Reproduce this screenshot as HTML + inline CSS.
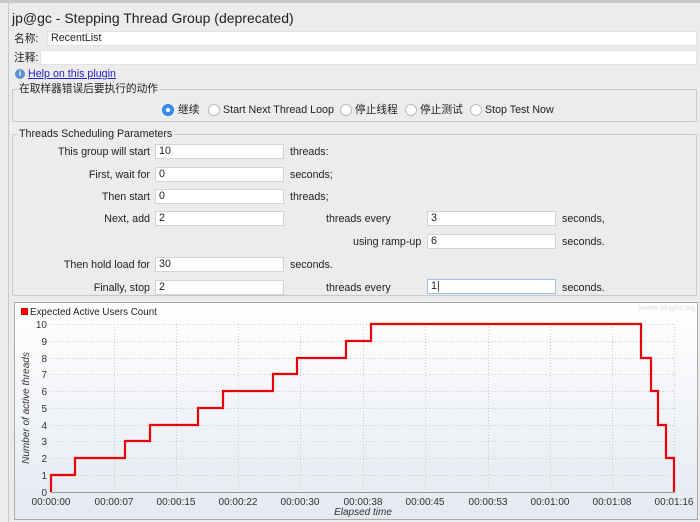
<!DOCTYPE html>
<html><head><meta charset="utf-8"><style>
*{box-sizing:border-box;margin:0;padding:0}
body{width:700px;height:522px;overflow:hidden;background:#ececec;font-family:"Liberation Sans","Noto Sans CJK SC",sans-serif;font-size:10.7px;color:#222;position:relative}
.a{position:absolute;white-space:nowrap;line-height:12px}
.in{position:absolute;background:#fff;border:1px solid #d4d4d4;height:15px;font-size:10.7px;line-height:13px;padding-left:3px}
.r{text-align:right}
.fs{position:absolute;border:1px solid #c9c9c9;border-radius:2px}
.lg{position:absolute;background:#ececec;padding:0 2px;font-size:10.7px;line-height:12px}
.rb{position:absolute;width:12px;height:12px;border-radius:50%;background:#fff;border:1px solid #bbb}
</style></head><body>
<div class="a" style="left:0;top:0;width:700px;height:3px;background:#c8c8c8"></div>
<div class="a" style="left:8px;top:3px;width:1px;height:519px;background:#c8c8c8"></div>
<div class="a" style="left:12px;top:10px;font-size:14px;line-height:16px;color:#222">jp@gc - Stepping Thread Group (deprecated)</div>
<div class="a" style="left:14px;top:33px">名称:</div>
<div class="in" style="left:47px;top:31px;width:650px;border-color:#e2e2e2">RecentList</div>
<div class="a" style="left:14px;top:52px">注释:</div>
<div class="in" style="left:40px;top:50px;width:657px;border-color:#e2e2e2"></div>
<div class="a" style="left:15px;top:69px;width:10px;height:10px;border-radius:50%;background:#5b8fd0;color:#fff;font-size:8px;text-align:center;line-height:10px;font-weight:bold">i</div>
<div class="a" style="left:28px;top:68px;color:#2222cc;text-decoration:underline">Help on this plugin</div>
<div class="fs" style="left:12px;top:89px;width:685px;height:33px"></div>
<div class="lg" style="left:17px;top:83px">在取样器错误后要执行的动作</div>
<div class="rb" style="left:162px;top:104px;background:#3b8ef0;border-color:#2d7fe0"><div style="position:absolute;left:3px;top:3px;width:4px;height:4px;border-radius:50%;background:#fff"></div></div>
<div class="a" style="left:178px;top:104px">继续</div>
<div class="rb" style="left:208px;top:104px"></div>
<div class="a" style="left:223px;top:104px">Start Next Thread Loop</div>
<div class="rb" style="left:340px;top:104px"></div>
<div class="a" style="left:355px;top:104px">停止线程</div>
<div class="rb" style="left:405px;top:104px"></div>
<div class="a" style="left:420px;top:104px">停止测试</div>
<div class="rb" style="left:470px;top:104px"></div>
<div class="a" style="left:485px;top:104px">Stop Test Now</div>
<div class="fs" style="left:12px;top:134px;width:685px;height:162px"></div>
<div class="lg" style="left:17px;top:128px">Threads Scheduling Parameters</div>
<div class="a r" style="left:0;width:150px;top:146px">This group will start</div>
<div class="in" style="left:155px;top:144px;width:129px">10</div>
<div class="a" style="left:290px;top:146px">threads:</div>
<div class="a r" style="left:0;width:150px;top:169px">First, wait for</div>
<div class="in" style="left:155px;top:167px;width:129px">0</div>
<div class="a" style="left:290px;top:169px">seconds;</div>
<div class="a r" style="left:0;width:150px;top:191px">Then start</div>
<div class="in" style="left:155px;top:189px;width:129px">0</div>
<div class="a" style="left:290px;top:191px">threads;</div>
<div class="a r" style="left:0;width:150px;top:213px">Next, add</div>
<div class="in" style="left:155px;top:211px;width:129px">2</div>
<div class="a" style="left:326px;top:213px">threads every</div>
<div class="in" style="left:427px;top:211px;width:129px">3</div>
<div class="a" style="left:562px;top:213px">seconds,</div>
<div class="a" style="left:353px;top:236px">using ramp-up</div>
<div class="in" style="left:427px;top:234px;width:129px">6</div>
<div class="a" style="left:562px;top:236px">seconds.</div>
<div class="a r" style="left:0;width:150px;top:259px">Then hold load for</div>
<div class="in" style="left:155px;top:257px;width:129px">30</div>
<div class="a" style="left:290px;top:259px">seconds.</div>
<div class="a r" style="left:0;width:150px;top:282px">Finally, stop</div>
<div class="in" style="left:155px;top:280px;width:129px">2</div>
<div class="a" style="left:326px;top:282px">threads every</div>
<div class="in" style="left:427px;top:279px;width:129px;border-color:#9cc0e8">1|</div>
<div class="a" style="left:562px;top:282px">seconds.</div>
<svg class="a" style="left:14px;top:302px;line-height:normal" width="684" height="218" viewBox="14 302 684 218">
<defs><linearGradient id="g" x1="0" y1="0" x2="0" y2="1"><stop offset="0" stop-color="#fff"/><stop offset="1" stop-color="#e4e9f1"/></linearGradient></defs>
<rect x="14.5" y="302.5" width="683" height="217" fill="url(#g)" stroke="#aaa"/>
<rect x="21" y="308" width="7" height="7" fill="#e00"/>
<text x="30" y="315" font-size="9.8" fill="#222" font-family="Liberation Sans">Expected Active Users Count</text>
<text x="695" y="310" font-size="7" fill="#ddd" text-anchor="end" font-family="Liberation Sans">jmeter-plugins.org</text>
<g stroke="#ccc" stroke-dasharray="1,2" stroke-width="1">
<line x1="51" x2="675" y1="324.5" y2="324.5"/><line x1="51" x2="675" y1="341.5" y2="341.5"/><line x1="51" x2="675" y1="358.5" y2="358.5"/><line x1="51" x2="675" y1="374.5" y2="374.5"/><line x1="51" x2="675" y1="391.5" y2="391.5"/><line x1="51" x2="675" y1="408.5" y2="408.5"/><line x1="51" x2="675" y1="425.5" y2="425.5"/><line x1="51" x2="675" y1="441.5" y2="441.5"/><line x1="51" x2="675" y1="458.5" y2="458.5"/><line x1="51" x2="675" y1="475.5" y2="475.5"/>
<line y1="324" y2="492" x1="114.5" x2="114.5"/><line y1="324" y2="492" x1="176.5" x2="176.5"/><line y1="324" y2="492" x1="238.5" x2="238.5"/><line y1="324" y2="492" x1="300.5" x2="300.5"/><line y1="324" y2="492" x1="363.5" x2="363.5"/><line y1="324" y2="492" x1="425.5" x2="425.5"/><line y1="324" y2="492" x1="488.5" x2="488.5"/><line y1="324" y2="492" x1="550.5" x2="550.5"/><line y1="324" y2="492" x1="612.5" x2="612.5"/><line y1="324" y2="492" x1="674.5" x2="674.5"/>
</g>
<line x1="51" x2="675" y1="492.5" y2="492.5" stroke="#999"/>
<g font-size="10" fill="#333" text-anchor="end" font-family="Liberation Sans">
<text x="47" y="328">10</text><text x="47" y="345">9</text><text x="47" y="362">8</text><text x="47" y="378">7</text><text x="47" y="395">6</text><text x="47" y="412">5</text><text x="47" y="429">4</text><text x="47" y="445">3</text><text x="47" y="462">2</text><text x="47" y="479">1</text><text x="47" y="496">0</text>
</g>
<g font-size="10" fill="#333" text-anchor="middle" font-family="Liberation Sans">
<text x="51" y="505">00:00:00</text><text x="114" y="505">00:00:07</text><text x="176" y="505">00:00:15</text><text x="238" y="505">00:00:22</text><text x="300" y="505">00:00:30</text><text x="363" y="505">00:00:38</text><text x="425" y="505">00:00:45</text><text x="488" y="505">00:00:53</text><text x="550" y="505">00:01:00</text><text x="612" y="505">00:01:08</text><text x="674" y="505">00:01:16</text>
<text x="363" y="515" font-style="italic">Elapsed time</text>
<text transform="translate(29,408) rotate(-90)" font-style="italic">Number of active threads</text>
</g>
<path d="M51,492V475H75V458H125V441H150V425H198V408H223V391H273V374H297V358H346V341H371V324H641V358H651V391H658V425H666V458H674V492" fill="none" stroke="#e8000a" stroke-width="2.2"/>
</svg>
</body></html>
